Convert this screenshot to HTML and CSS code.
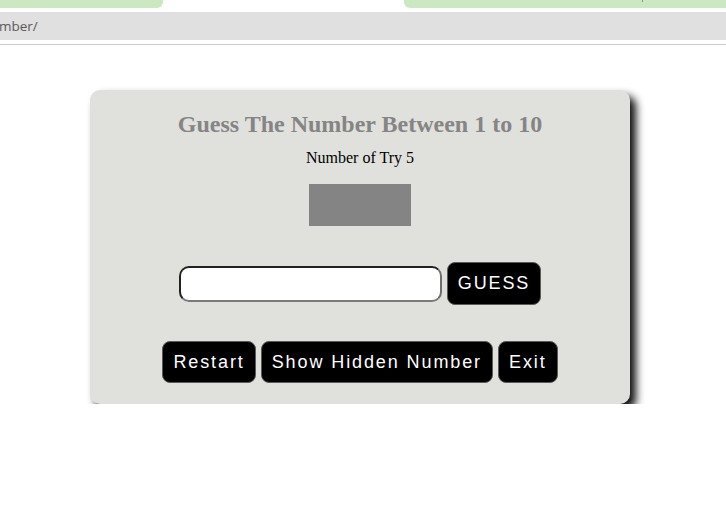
FILE: index.html
```html
<!DOCTYPE html>
<html lang="en">
<head>
<meta charset="utf-8">
<title>Guess The Number</title>
<link rel="stylesheet" href="styles.css">
</head>
<body>
<div class="chrome">
  <div class="tabs">
    <div class="tab tab-left"></div>
    <div class="tab tab-right"><span class="tick"></span></div>
  </div>
  <div class="addr">mber/</div>
  <div class="sep"></div>
</div>
<main class="main">
  <section class="card">
    <h2 class="title">Guess The Number Between 1 to 10</h2>
    <p class="tries">Number of Try 5</p>
    <div class="hidden-box"></div>
    <div class="guess-row">
      <input class="guess-input" type="text">
      <button class="btn btn-guess">GUESS</button>
    </div>
    <div class="actions">
      <button class="btn">Restart</button>
      <button class="btn">Show Hidden Number</button>
      <button class="btn">Exit</button>
    </div>
  </section>
</main>
</body>
</html>
```
FILE: styles.css
```css
html, body {
  margin: 0;
  padding: 0;
  background: #ffffff;
}
body {
  font-family: "Liberation Serif", "Times New Roman", serif;
  overflow: hidden;
}
.chrome {
  display: flex;
  flex-direction: column;
}
.tabs {
  display: flex;
  justify-content: space-between;
  height: 8px;
}
.tab {
  background: #cce8c3;
  height: 8px;
}
.tab-left {
  width: 163px;
  border-bottom-right-radius: 6px;
}
.tab-right {
  width: 322px;
  border-bottom-left-radius: 6px;
  display: flex;
  padding-left: 238px;
  box-sizing: border-box;
}
.tick {
  width: 1px;
  height: 2px;
  background: #8a9a88;
}
.addr {
  margin-top: 4px;
  height: 28px;
  background: #e0e0e0;
  color: #5a5a5a;
  font-family: "Open Sans", "Noto Sans", sans-serif;
  font-size: 13.5px;
  line-height: 28px;
  padding-left: 0;
  text-indent: -1px;
}
.sep {
  margin-top: 4px;
  height: 1px;
  background: #cccccc;
}
.main {
  padding-top: 45px;
  padding-left: 90px;
}
.card {
  width: 540px;
  box-sizing: border-box;
  background: #e0e0dc;
  border-radius: 10px;
  box-shadow: 6px 6px 8px #111111;
  padding: 21px 0 21px;
  display: flex;
  flex-direction: column;
  align-items: center;
}
.title {
  margin: 0;
  font-size: 24px;
  font-weight: bold;
  color: #858585;
  line-height: normal;
}
.tries {
  margin: 11px 0 0;
  font-size: 16px;
  color: #000000;
  line-height: normal;
}
.hidden-box {
  margin-top: 17px;
  width: 102px;
  height: 42px;
  background: #848484;
}
.guess-row {
  margin-top: 36px;
  display: flex;
  align-items: center;
  gap: 5px;
}
.guess-input {
  width: 263px;
  height: 36px;
  box-sizing: border-box;
  margin: 0;
  border: 2px solid;
  border-color: #222222 #6e6e6e #7a7a7a #222222;
  border-radius: 10px;
  background: #ffffff;
  outline: none;
}
.actions {
  margin-top: 36px;
  display: flex;
  gap: 5px;
}
.btn {
  margin: 0;
  height: 42px;
  padding: 0 10px;
  box-sizing: border-box;
  background: #000000;
  color: #ffffff;
  border: 1px solid #5a5a5a;
  border-radius: 8px;
  font-family: "Liberation Sans", Arial, sans-serif;
  font-size: 18px;
  letter-spacing: 1.9px;
  cursor: pointer;
}
.btn-guess {
  height: 43px;
  padding: 0 10px;
}
```
